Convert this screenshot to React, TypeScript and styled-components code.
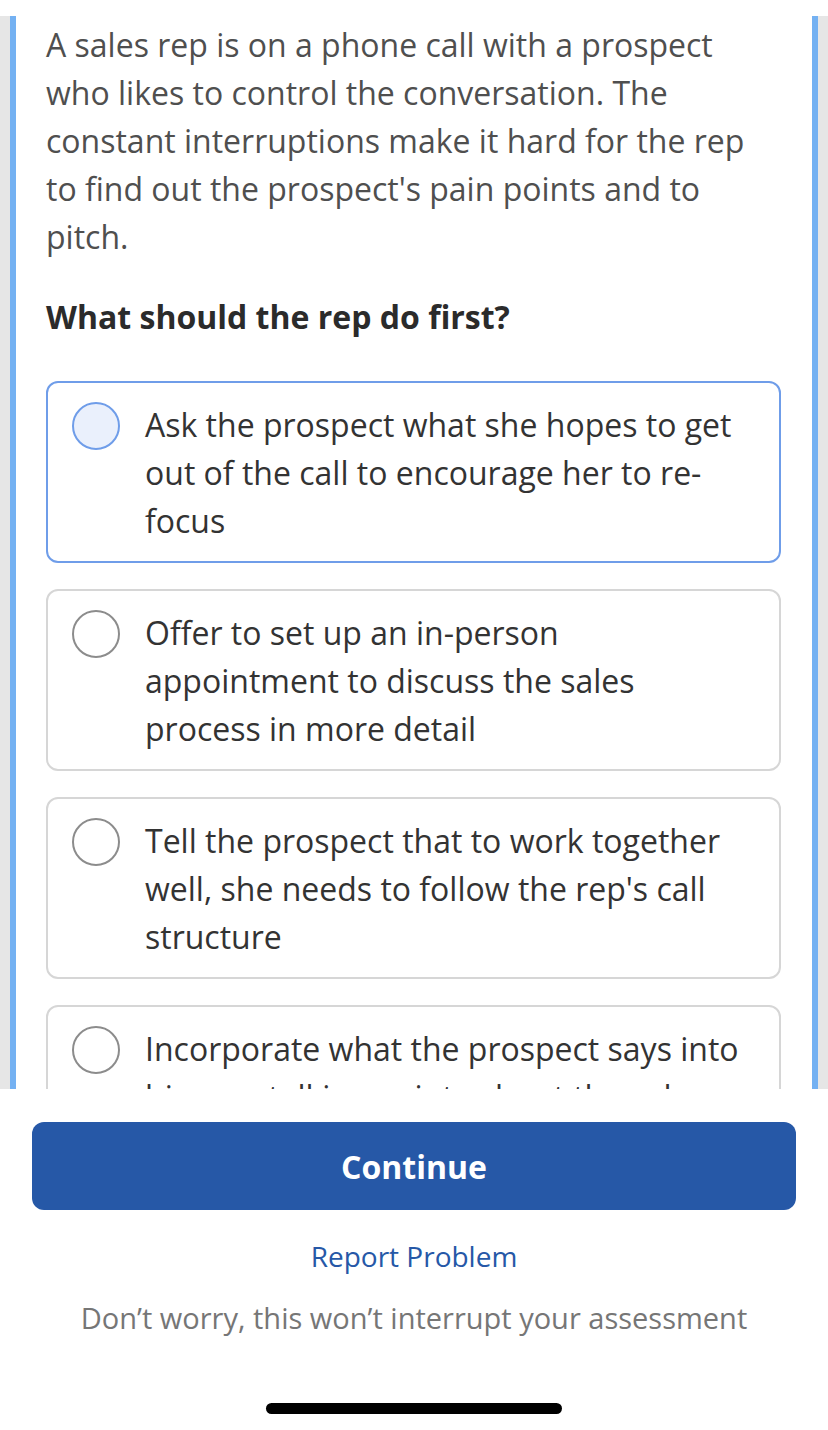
import React from 'react';
import styled, { createGlobalStyle } from 'styled-components';

const GlobalStyle = createGlobalStyle`
  html, body {
    margin: 0;
    padding: 0;
    background: #ffffff;
  }
  body {
    font-family: "Open Sans", "Noto Sans", "Liberation Sans", sans-serif;
    -webkit-font-smoothing: antialiased;
  }
`;

const Screen = styled.div`
  width: 828px;
  height: 1430px;
  display: flex;
  flex-direction: column;
  background: #ffffff;
  overflow: hidden;
`;

const Frame = styled.div`
  margin-top: 16px;
  height: 1073px;
  display: flex;
  background: #e6e6e6;
  padding: 0 10px;
`;

const Panel = styled.div`
  flex: 1;
  border-left: 6px solid #74b1f2;
  border-right: 6px solid #74b1f2;
  background: #ffffff;
  overflow: hidden;
`;

const Content = styled.div`
  padding: 5px 31px 0 30px;
`;

const Scenario = styled.p`
  margin: 0;
  padding-right: 20px;
  font-size: 32px;
  line-height: 48px;
  color: #4f4f4f;
`;

const Question = styled.h2`
  margin: 32px 0 40px;
  font-size: 32px;
  line-height: 48px;
  font-weight: 700;
  color: #2b2b2b;
`;

const Options = styled.div`
  display: flex;
  flex-direction: column;
  gap: 26px;
`;

const Option = styled.label<{ $selected?: boolean }>`
  display: flex;
  align-items: flex-start;
  gap: 25px;
  padding: 18px 24px 16px 24px;
  border: 2px solid ${p => (p.$selected ? '#6f9de9' : '#d6d6d6')};
  border-radius: 12px;
  background: #ffffff;
`;

const Radio = styled.span<{ $selected?: boolean }>`
  flex: none;
  width: 44px;
  height: 44px;
  margin-top: 1px;
  border-radius: 50%;
  border: 2px solid ${p => (p.$selected ? '#6f9de9' : '#8c8c8c')};
  background: ${p => (p.$selected ? '#eaf0fc' : '#ffffff')};
`;

const OptionText = styled.span`
  font-size: 32px;
  line-height: 48px;
  color: #333333;
`;

const Footer = styled.div`
  display: flex;
  flex-direction: column;
  align-items: center;
  padding: 33px 32px 0;
`;

const ContinueButton = styled.button`
  width: 100%;
  height: 88px;
  border: none;
  border-radius: 12px;
  background: #2658a7;
  color: #ffffff;
  font-family: inherit;
  font-size: 32px;
  font-weight: 700;
  cursor: pointer;
`;

const ReportLink = styled.a`
  margin-top: 28px;
  font-size: 28px;
  line-height: 36px;
  color: #2658a7;
  text-decoration: none;
`;

const Note = styled.p`
  margin: 26px 0 0;
  font-size: 29px;
  line-height: 36px;
  color: #767676;
`;

const HomeIndicator = styled.div`
  margin-top: 67px;
  width: 296px;
  height: 11px;
  border-radius: 6px;
  background: #000000;
`;

const options = [
  'Ask the prospect what she hopes to get out of the call to encourage her to re-focus',
  'Offer to set up an in-person appointment to discuss the sales process in more detail',
  "Tell the prospect that to work together well, she needs to follow the rep's call structure",
  'Incorporate what the prospect says into his own talking points about the sales process',
];

const App: React.FC = () => {
  const selected = 0;

  return (
    <Screen>
      <GlobalStyle />
      <Frame>
        <Panel>
          <Content>
            <Scenario>
              A sales rep is on a phone call with a prospect who likes to control the
              conversation. The constant interruptions make it hard for the rep to find out
              the prospect's pain points and to pitch.
            </Scenario>
            <Question>What should the rep do first?</Question>
            <Options>
              {options.map((text, index) => (
                <Option key={index} $selected={index === selected}>
                  <Radio $selected={index === selected} />
                  <OptionText>{text}</OptionText>
                </Option>
              ))}
            </Options>
          </Content>
        </Panel>
      </Frame>
      <Footer>
        <ContinueButton>Continue</ContinueButton>
        <ReportLink href="#">Report Problem</ReportLink>
        <Note>Don’t worry, this won’t interrupt your assessment</Note>
        <HomeIndicator />
      </Footer>
    </Screen>
  );
};

export default App;
